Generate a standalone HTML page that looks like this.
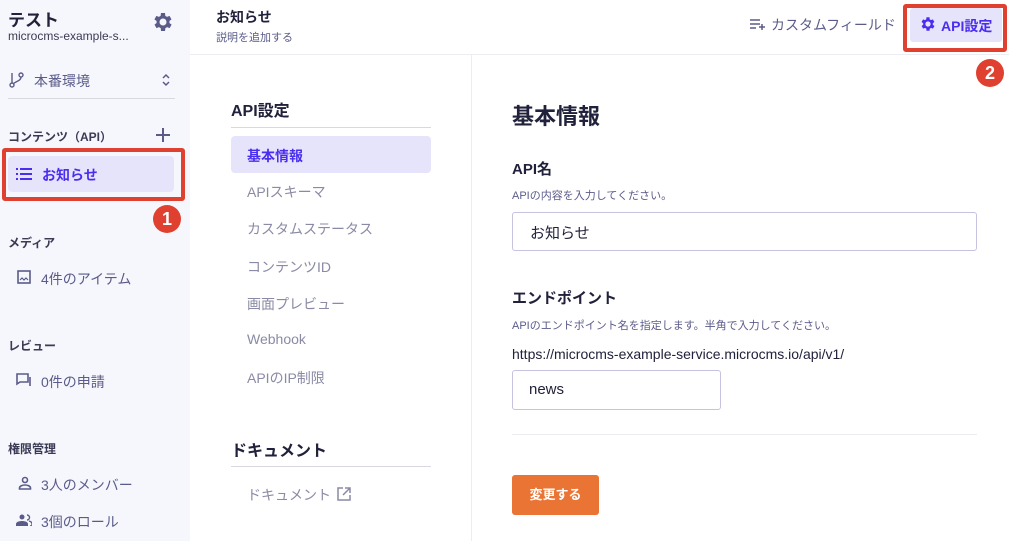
<!DOCTYPE html>
<html><head><meta charset="utf-8"><style>
*{margin:0;padding:0;box-sizing:border-box}
body{width:1009px;height:541px;overflow:hidden;background:#fff;font-family:"Liberation Sans","Noto Sans CJK JP",sans-serif;position:relative;color:#21213b}
.a{position:absolute;white-space:nowrap}
.side{position:absolute;left:0;top:0;width:190px;height:541px;background:#f6f7fc}
.mi{font-size:14px;color:#5b5b8a}
.sec{font-size:12px;font-weight:bold;color:#3a3a55}
.nav{font-size:14px;color:#8a8aa6}
.red{position:absolute;border:4px solid #e0402f;border-radius:3px}
.badge{position:absolute;width:28px;height:28px;border-radius:50%;background:#e0402f;color:#fff;font-weight:bold;font-size:18px;text-align:center;line-height:28px}
</style></head><body>
<div class="side"></div>
<div class="a" style="left:8px;top:6px;font-size:17px;font-weight:bold">テスト</div>
<div class="a" style="left:8px;top:29px;font-size:12px;color:#3a3a55">microcms-example-s...</div>
<svg class="a" style="left:151px;top:10px" width="24" height="24" viewBox="0 0 24 24"><path fill="#5b5b8a" d="M19.4 13a7.5 7.5 0 000-2l2.1-1.6-2-3.5-2.5 1a7 7 0 00-1.7-1L15 3h-4l-.4 2.9a7 7 0 00-1.7 1l-2.5-1-2 3.5L6.6 11a7.5 7.5 0 000 2l-2.1 1.6 2 3.5 2.5-1a7 7 0 001.7 1L11 21h4l.4-2.9a7 7 0 001.7-1l2.5 1 2-3.5zM13 15.5a3.5 3.5 0 110-7 3.5 3.5 0 010 7z" transform="translate(-1 0)"/></svg>
<svg class="a" style="left:8px;top:71px" width="18" height="18" viewBox="0 0 18 18" fill="none" stroke="#5b5b8a" stroke-width="1.4"><circle cx="4" cy="14" r="2"/><circle cx="13" cy="4" r="2"/><path d="M4 2v10M13 6c0 4-5 4-8 7"/></svg>
<div class="a mi" style="left:34px;top:71px">本番環境</div>
<svg class="a" style="left:161px;top:73px" width="10" height="14" viewBox="0 0 10 14" fill="none" stroke="#5b5b8a" stroke-width="1.5"><path d="M2 5l3-3 3 3M2 9l3 3 3-3"/></svg>
<div class="a" style="left:8px;top:98px;width:167px;height:1px;background:#d8d8e0"></div>
<div class="a sec" style="left:8px;top:128px">コンテンツ（API）</div>
<svg class="a" style="left:155px;top:127px" width="16" height="16" viewBox="0 0 16 16" stroke="#5b5b8a" stroke-width="2"><path d="M8 1v14M1 8h14"/></svg>
<div class="a" style="left:8px;top:156px;width:166px;height:36px;background:#e6e4fb;border-radius:4px"></div>
<svg class="a" style="left:16px;top:168px" width="16" height="12" viewBox="0 0 16 12" fill="#4a2ef0"><rect x="0" y="0" width="2" height="2"/><rect x="4" y="0" width="12" height="2"/><rect x="0" y="5" width="2" height="2"/><rect x="4" y="5" width="12" height="2"/><rect x="0" y="10" width="2" height="2"/><rect x="4" y="10" width="12" height="2"/></svg>
<div class="a" style="left:42px;top:165px;font-size:14px;font-weight:bold;color:#4a2ef0">お知らせ</div>
<div class="red" style="left:2px;top:148px;width:183px;height:53px"></div>
<div class="badge" style="left:153px;top:205px">1</div>
<div class="a sec" style="left:8px;top:234px">メディア</div>
<svg class="a" style="left:17px;top:270px" width="14" height="14" viewBox="0 0 14 14" fill="none" stroke="#5b5b8a" stroke-width="1.6"><rect x="1" y="1" width="12" height="12"/><path d="M3 10l2-2 2 2 2-2 2 2" stroke-width="1.2"/></svg>
<div class="a mi" style="left:41px;top:269px">4件のアイテム</div>
<div class="a sec" style="left:8px;top:337px">レビュー</div>
<svg class="a" style="left:16px;top:373px" width="16" height="14" viewBox="0 0 16 14" fill="none" stroke="#5b5b8a" stroke-width="1.6"><path d="M1 1h11v8H4L1 11zM14 4v9"/></svg>
<div class="a mi" style="left:41px;top:372px">0件の申請</div>
<div class="a sec" style="left:8px;top:440px">権限管理</div>
<svg class="a" style="left:18px;top:476px" width="14" height="14" viewBox="0 0 14 14" fill="none" stroke="#5b5b8a" stroke-width="1.6"><circle cx="7" cy="4" r="2.5"/><path d="M1.5 13v-1c0-2 3-3 5.5-3s5.5 1 5.5 3v1z"/></svg>
<div class="a mi" style="left:41px;top:475px">3人のメンバー</div>
<svg class="a" style="left:16px;top:514px" width="16" height="12" viewBox="0 0 16 12" fill="#5b5b8a"><circle cx="6" cy="3" r="2.5"/><path d="M0 12v-2c0-2 3-3 6-3s6 1 6 3v2z"/><path d="M11 1a2.5 2.5 0 010 5M13 7c2 .5 3 1.5 3 3v2h-2" fill="none" stroke="#5b5b8a" stroke-width="1.4"/></svg>
<div class="a mi" style="left:41px;top:512px">3個のロール</div>

<div class="a" style="left:190px;top:54px;width:819px;height:1px;background:#ececf2"></div>
<div class="a" style="left:216px;top:7px;font-size:14px;font-weight:bold">お知らせ</div>
<div class="a" style="left:216px;top:29px;font-size:11px;color:#5b5b8a">説明を追加する</div>
<svg class="a" style="left:750px;top:18px" width="16" height="12" viewBox="0 0 16 12" stroke="#5b5b8a" stroke-width="1.5"><path d="M0 2h10M0 6h10M0 10h6M12 6v6M9 9h6"/></svg>
<div class="a" style="left:771px;top:15px;font-size:14px;color:#5b5b8a">カスタムフィールド</div>
<div class="a" style="left:910px;top:8px;width:92px;height:34px;background:#e6e4fb;border-radius:3px"></div>
<svg class="a" style="left:919px;top:15px" width="18" height="18" viewBox="0 0 24 24"><path fill="#4a2ef0" d="M19.4 13a7.5 7.5 0 000-2l2.1-1.6-2-3.5-2.5 1a7 7 0 00-1.7-1L15 3h-4l-.4 2.9a7 7 0 00-1.7 1l-2.5-1-2 3.5L6.6 11a7.5 7.5 0 000 2l-2.1 1.6 2 3.5 2.5-1a7 7 0 001.7 1L11 21h4l.4-2.9a7 7 0 001.7-1l2.5 1 2-3.5zM13 15.5a3.5 3.5 0 110-7 3.5 3.5 0 010 7z" transform="translate(-1 0)"/></svg>
<div class="a" style="left:941px;top:16px;font-size:14px;font-weight:bold;color:#4a2ef0">API設定</div>
<div class="red" style="left:903px;top:4px;width:104px;height:48px"></div>
<div class="badge" style="left:976px;top:59px">2</div>

<div class="a" style="left:471px;top:55px;width:1px;height:486px;background:#ececf2"></div>
<div class="a" style="left:231px;top:97px;font-size:16px;font-weight:bold">API設定</div>
<div class="a" style="left:231px;top:127px;width:200px;height:1px;background:#d8d8e0"></div>
<div class="a" style="left:231px;top:136px;width:200px;height:37px;background:#e6e4fb;border-radius:4px"></div>
<div class="a" style="left:247px;top:146px;font-size:14px;font-weight:bold;color:#4a2ef0">基本情報</div>
<div class="a nav" style="left:247px;top:182px">APIスキーマ</div>
<div class="a nav" style="left:247px;top:219px">カスタムステータス</div>
<div class="a nav" style="left:247px;top:257px">コンテンツID</div>
<div class="a nav" style="left:247px;top:294px">画面プレビュー</div>
<div class="a nav" style="left:247px;top:331px">Webhook</div>
<div class="a nav" style="left:247px;top:368px">APIのIP制限</div>
<div class="a" style="left:231px;top:437px;font-size:16px;font-weight:bold">ドキュメント</div>
<div class="a" style="left:231px;top:466px;width:200px;height:1px;background:#d8d8e0"></div>
<div class="a nav" style="left:247px;top:485px">ドキュメント</div>
<svg class="a" style="left:337px;top:487px" width="14" height="14" viewBox="0 0 14 14" fill="none" stroke="#8a8aa6" stroke-width="1.5"><path d="M6 1H1v12h12V8M8 1h5v5M13 1L6 8"/></svg>

<div class="a" style="left:512px;top:99px;font-size:22px;font-weight:bold">基本情報</div>
<div class="a" style="left:512px;top:158px;font-size:15px;font-weight:bold">API名</div>
<div class="a" style="left:512px;top:187px;font-size:11px;color:#5b5b8a">APIの内容を入力してください。</div>
<div class="a" style="left:512px;top:212px;width:465px;height:39px;border:1px solid #c6c3e0;border-radius:3px"></div>
<div class="a" style="left:530px;top:222px;font-size:15px">お知らせ</div>
<div class="a" style="left:512px;top:287px;font-size:15px;font-weight:bold">エンドポイント</div>
<div class="a" style="left:512px;top:317px;font-size:11px;color:#5b5b8a">APIのエンドポイント名を指定します。半角で入力してください。</div>
<div class="a" style="left:512px;top:346px;font-size:14px">https://microcms-example-service.microcms.io/api/v1/</div>
<div class="a" style="left:512px;top:370px;width:209px;height:40px;border:1px solid #c6c3e0;border-radius:3px"></div>
<div class="a" style="left:529px;top:381px;font-size:15px">news</div>
<div class="a" style="left:512px;top:434px;width:465px;height:1px;background:#ececf2"></div>
<div class="a" style="left:512px;top:475px;width:87px;height:40px;background:#ea7434;border-radius:3px;color:#fff;font-size:13px;font-weight:bold;text-align:center;line-height:40px">変更する</div>
</body></html>
